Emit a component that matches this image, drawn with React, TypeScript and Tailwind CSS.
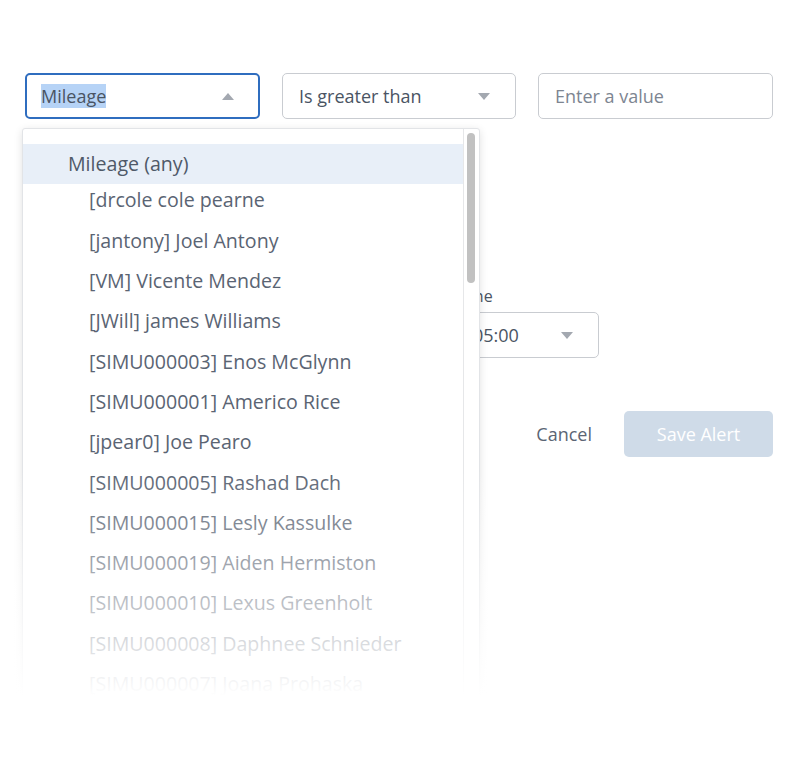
import { useState } from 'react';

const drivers = [
  '[drcole cole pearne',
  '[jantony] Joel Antony',
  '[VM] Vicente Mendez',
  '[JWill] james Williams',
  '[SIMU000003] Enos McGlynn',
  '[SIMU000001] Americo Rice',
  '[jpear0] Joe Pearo',
  '[SIMU000005] Rashad Dach',
  '[SIMU000015] Lesly Kassulke',
  '[SIMU000019] Aiden Hermiston',
  '[SIMU000010] Lexus Greenholt',
  '[SIMU000008] Daphnee Schnieder',
  '[SIMU000007] Joana Prohaska',
];

function Caret({ up = false }: { up?: boolean }) {
  return (
    <svg width="12" height="7" viewBox="0 0 12 7" className="shrink-0">
      {up ? <path d="M0 7 L6 0 L12 7 Z" fill="#a3a8b0" /> : <path d="M0 0 L6 7 L12 0 Z" fill="#a3a8b0" />}
    </svg>
  );
}

export default function App() {
  const [value, setValue] = useState('');

  return (
    <div
      className="relative w-[800px] h-[769px] overflow-hidden bg-white text-[#4d5766]"
      style={{ fontFamily: '"Open Sans", "Noto Sans", sans-serif' }}
    >
      {/* Filter row */}
      <div className="flex gap-[22px] pt-[73px] pl-[25px]">
        <div className="flex items-center justify-between w-[235px] h-[46px] pl-[14px] pr-[24px] border-2 border-[#2f6dbf] rounded-[5px]">
          <span className="text-[18px] leading-[24px] bg-[#b6d3f6] text-[#4a5463]">Mileage</span>
          <Caret up />
        </div>
        <div className="flex items-center justify-between w-[234px] h-[46px] pl-[16px] pr-[25px] border border-[#c9ccd1] rounded-[5px]">
          <span className="text-[18px] text-[#4a5463]">Is greater than</span>
          <Caret />
        </div>
        <input
          value={value}
          onChange={(e) => setValue(e.target.value)}
          placeholder="Enter a value"
          className="w-[235px] h-[46px] px-[16px] border border-[#c9ccd1] rounded-[5px] text-[18px] text-[#4a5463] placeholder:text-[#7d8591] outline-none"
        />
      </div>

      {/* Form behind the menu */}
      <div className="flex gap-[40px] pl-[25px] mt-[165px]">
        <div className="w-[391px]">
          <p className="text-[16px] leading-[24px]">Date</p>
          <div className="mt-[4px] h-[46px] border border-[#c9ccd1] rounded-[5px]" />
        </div>
        <div className="w-[143px]">
          <p className="text-[16px] leading-[24px] text-[#4a5463]">Time</p>
          <div className="mt-[4px] flex items-center justify-between h-[46px] pl-[16px] pr-[25px] border border-[#c9ccd1] rounded-[5px]">
            <span className="text-[18px] text-[#4a5463]">05:00</span>
            <Caret />
          </div>
        </div>
      </div>

      <div className="flex items-center justify-end gap-[32px] pr-[27px] mt-[53px]">
        <button className="text-[18px] text-[#5b6574]">Cancel</button>
        <button className="w-[149px] h-[46px] rounded-[5px] bg-[#cfdbe8] text-[18px] text-white">Save Alert</button>
      </div>

      {/* Open dropdown menu */}
      <div className="absolute left-[22px] top-[128px] w-[458px] h-[590px] flex bg-white border border-[#e2e4e7] rounded-[3px] shadow-[0_2px_8px_rgba(0,0,0,0.12)] overflow-hidden">
        <div className="flex-1 pt-[15px]">
          <div className="h-[40px] flex items-center pl-[45px] bg-[#e8eff8] text-[19.6px] text-[#4f5968]">Mileage (any)</div>
          <div className="-mt-[4px]">
            {drivers.map((d) => (
              <div key={d} className="h-[40.3px] flex items-center pl-[66px] text-[19.6px] text-[#5a6473] whitespace-nowrap">
                {d}
              </div>
            ))}
          </div>
        </div>
        <div className="w-[16px] border-l border-[#e6e7e9] pt-[4px] pl-[3px]">
          <div className="w-[8px] h-[150px] rounded-full bg-[#c1c1c1]" />
        </div>
      </div>

      {/* Bottom fade */}
      <div className="absolute left-0 top-[468px] w-full h-[301px] bg-[linear-gradient(to_bottom,rgba(255,255,255,0)_0px,#ffffff_228px)] pointer-events-none" />
    </div>
  );
}
